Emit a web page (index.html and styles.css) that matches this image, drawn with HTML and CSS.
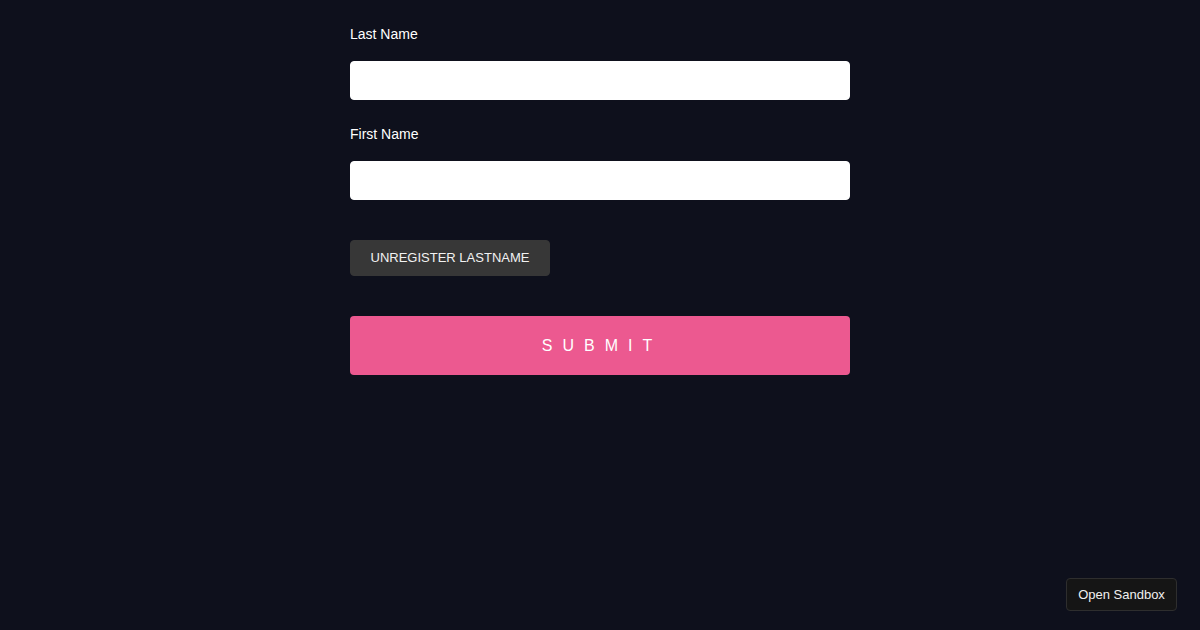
FILE: index.html
```html
<!DOCTYPE html>
<html>
<head>
<meta charset="utf-8">
<link rel="stylesheet" href="styles.css">
</head>
<body>
<form class="form">
  <label class="label">Last Name</label>
  <input class="input" type="text">
  <label class="label">First Name</label>
  <input class="input" type="text">
  <button class="btn-unregister" type="button">Unregister lastName</button>
  <button class="btn-submit" type="submit">Submit</button>
</form>
<button class="open-sandbox" type="button">Open Sandbox</button>
</body>
</html>
```
FILE: styles.css
```css
html, body {
  margin: 0;
  padding: 0;
  background: #0e101c;
  font-family: "Liberation Sans", Arial, Helvetica, sans-serif;
  height: 100%;
}
.form {
  width: 500px;
  margin: 0 auto;
}
.label {
  display: block;
  color: #ffffff;
  font-size: 14px;
  line-height: 2;
  margin-top: 20px;
  margin-bottom: 13px;
  font-weight: 300;
}
.input {
  display: block;
  box-sizing: border-box;
  width: 100%;
  height: 39px;
  border-radius: 4px;
  border: 1px solid #ffffff;
  background: #ffffff;
  padding: 10px 15px;
  margin: 0 0 10px 0;
  font-size: 14px;
  font-family: inherit;
}
.btn-unregister {
  display: block;
  box-sizing: border-box;
  width: 200px;
  height: 36px;
  margin-top: 40px;
  margin-bottom: 20px;
  background: #373737;
  color: #f2f2f2;
  border: 1px solid #373737;
  border-radius: 4px;
  padding: 0 10px 2px 10px;
  font-size: 13px;
  font-family: inherit;
  text-transform: uppercase;
}
.btn-submit {
  display: block;
  box-sizing: border-box;
  width: 100%;
  height: 59px;
  margin-top: 40px;
  background: #ec5990;
  color: #ffffff;
  border: none;
  border-radius: 4px;
  font-size: 16px;
  font-weight: 300;
  letter-spacing: 10px;
  text-indent: 4px;
  text-transform: uppercase;
  font-family: inherit;
}
.open-sandbox {
  position: fixed;
  right: 23px;
  bottom: 19px;
  box-sizing: border-box;
  width: 111px;
  height: 33px;
  background: #151515;
  color: #f0f0f0;
  border: 1px solid #2e2e2e;
  border-radius: 4px;
  font-size: 13px;
  font-family: inherit;
  padding: 0;
}
```
